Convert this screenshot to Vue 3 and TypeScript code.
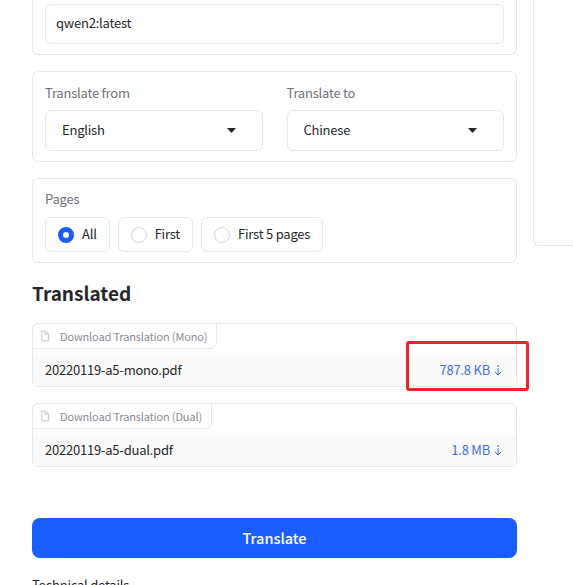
<script setup lang="ts">
interface PageOption { label: string; checked: boolean }
interface OutputFile { label: string; name: string; size: string }
const pageOptions: PageOption[] = [
  { label: 'All', checked: true },
  { label: 'First', checked: false },
  { label: 'First 5 pages', checked: false },
]
const files: OutputFile[] = [
  { label: 'Download Translation (Mono)', name: '20220119-a5-mono.pdf', size: '787.8 KB' },
  { label: 'Download Translation (Dual)', name: '20220119-a5-dual.pdf', size: '1.8 MB' },
]
const selects = [
  { label: 'Translate from', value: 'English' },
  { label: 'Translate to', value: 'Chinese' },
]
</script>

<template>
  <div class="page">
    <main class="main">
      <section class="card first">
        <div class="input">qwen2:latest</div>
      </section>

      <section class="card langs">
        <div v-for="s in selects" :key="s.label" class="field">
          <div class="label">{{ s.label }}</div>
          <div class="select">
            <span>{{ s.value }}</span>
            <svg width="9" height="5" viewBox="0 0 9 5"><path d="M0 0h9L4.5 5z" fill="#27272a" /></svg>
          </div>
        </div>
      </section>

      <section class="card pages">
        <div class="label">Pages</div>
        <div class="radios">
          <div v-for="o in pageOptions" :key="o.label" class="radio">
            <span class="dot" :class="{ on: o.checked }"></span>
            <span class="radio-text">{{ o.label }}</span>
          </div>
        </div>
      </section>

      <h2 class="title">Translated</h2>

      <div class="files">
        <section v-for="f in files" :key="f.name" class="file">
          <div class="tab">
            <svg width="12" height="12" viewBox="0 0 12 12" fill="none" stroke="#d1d5db" stroke-width="1.4" stroke-linejoin="round">
              <path d="M3 1.2h3.6L9.6 4.2v5.6a1 1 0 0 1-1 1H3.6a1 1 0 0 1-1-1V1.6z" />
              <path d="M6.4 1.2v3.2h3.2" />
            </svg>
            <span>{{ f.label }}</span>
          </div>
          <div class="row">
            <span class="name">{{ f.name }}</span>
            <span class="size">{{ f.size }}
              <svg class="arrow" width="8" height="11" viewBox="0 0 8 11" fill="none" stroke="#3b6ff0" stroke-width="1">
                <path d="M4 0v2M4 3.2v6.6M1 7l3 3 3-3" />
              </svg>
            </span>
          </div>
        </section>
      </div>

      <button class="translate" type="button">Translate</button>
      <div class="details">Technical details</div>
    </main>
    <aside class="side"></aside>
    <div class="mark"></div>
  </div>
</template>

<style>
html, body { margin: 0; background: #fff; overflow: hidden; }
</style>

<style scoped>
.page {
  position: relative;
  width: 573px;
  height: 585px;
  overflow: hidden;
  display: flex;
  align-items: flex-start;
  gap: 16px;
  padding-left: 32px;
  box-sizing: border-box;
  background: #fff;
  font-family: "Noto Sans CJK SC", "Source Sans Pro", sans-serif;
  font-size: 13px;
  letter-spacing: -0.22px;
  line-height: 20px;
  color: #27272a;
}
.main { width: 485px; flex: none; }
.card {
  box-sizing: border-box;
  border: 1px solid #e5e7eb;
  border-radius: 6px;
  padding: 12px;
  margin-bottom: 16px;
}
.first {
  height: 55px;
  padding-top: 4px;
  border-top: none;
  border-radius: 0 0 6px 6px;
}
.input {
  height: 40px;
  box-sizing: border-box;
  border: 1px solid #e5e7eb;
  border-radius: 6px;
  padding: 8px 10px;
}
.langs {
  height: 91px;
  display: flex;
  gap: 24px;
}
.field { flex: 1 1 0; min-width: 0; }
.label { color: #71717a; height: 20px; margin-top: -1px; margin-bottom: 7px; }
.select {
  height: 41px;
  box-sizing: border-box;
  border: 1px solid #e5e7eb;
  border-radius: 6px;
  padding: 0 26px 0 16px;
  display: flex;
  align-items: center;
  justify-content: space-between;
}
.select span { margin-top: -1px; }
.pages { height: 85px; }
.pages .label { margin-top: -2px; margin-bottom: 8px; }
.radios { display: flex; gap: 8px; }
.radio {
  height: 35px;
  box-sizing: border-box;
  border: 1px solid #e5e7eb;
  border-radius: 6px;
  padding: 0 12px;
  display: flex;
  align-items: center;
  gap: 8px;
}
.radio-text { margin-top: -1px; }
.dot {
  width: 16px;
  height: 16px;
  box-sizing: border-box;
  border: 1px solid #d4d4d8;
  border-radius: 50%;
  background: #fff;
}
.dot.on { border: 5px solid #1a5eff; }
.title {
  margin: 14px 0 16px;
  height: 28px;
  font-size: 19px;
  line-height: 28px;
  font-weight: 700;
  letter-spacing: 0;
  color: #27272a;
}
.files { display: flex; flex-direction: column; gap: 16px; }
.file {
  height: 64px;
  box-sizing: border-box;
  border: 1px solid #e5e7eb;
  border-radius: 6px;
}
.tab {
  width: fit-content;
  height: 26px;
  box-sizing: border-box;
  margin: -1px 0 0 -1px;
  border: 1px solid #e5e7eb;
  border-radius: 6px 0 6px 0;
  padding: 0 9px 0 6px;
  display: flex;
  align-items: center;
  gap: 9px;
  font-size: 11px;
  letter-spacing: -0.15px;
  color: #8b8b93;
}
.row {
  margin-top: 7px;
  height: 30px;
  background: #fafafa;
  padding: 0 14px 2px 12px;
  box-sizing: border-box;
  display: flex;
  align-items: center;
  justify-content: space-between;
}
.size { color: #3b6ff0; display: flex; align-items: center; gap: 4px; }
.arrow { margin-top: 1px; }
.translate {
  display: block;
  width: 100%;
  height: 40px;
  margin-top: 51px;
  border: none;
  border-radius: 8px;
  background: #1a5eff;
  color: #fff;
  font: inherit;
  font-size: 14.5px;
  letter-spacing: 0;
  font-weight: 500;
}
.details { margin-top: 17px; }
.side {
  flex: 1;
  height: 246px;
  box-sizing: border-box;
  border: 1px solid #e5e7eb;
  border-top: none;
  border-right: none;
  border-radius: 0 0 0 6px;
}
.mark {
  position: absolute;
  left: 406px;
  top: 341px;
  width: 123px;
  height: 50px;
  box-sizing: border-box;
  border: 3px solid #f5222d;
  border-radius: 3px;
}
</style>
